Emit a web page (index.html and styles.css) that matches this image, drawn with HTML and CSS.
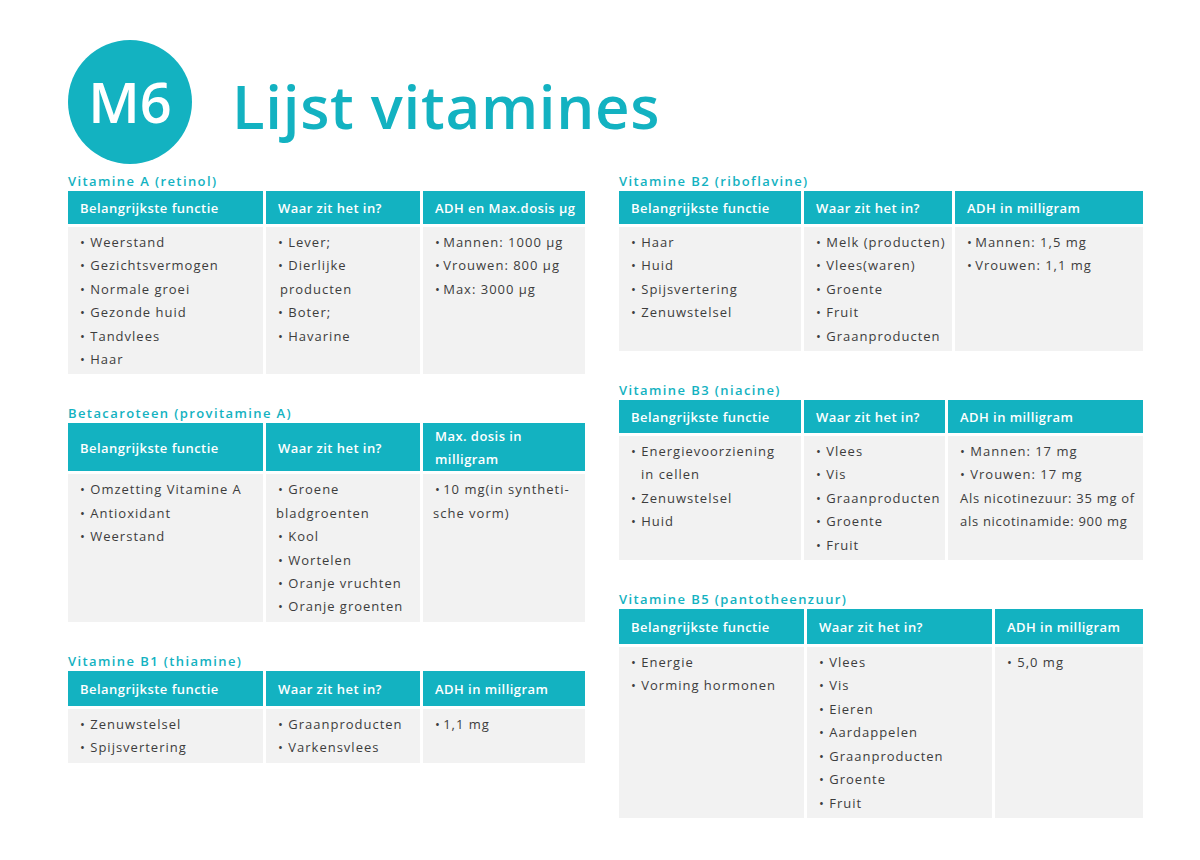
FILE: index.html
```html
<!DOCTYPE html>
<html lang="nl">
<head>
<meta charset="utf-8">
<title>Lijst vitamines</title>
<link rel="stylesheet" href="styles.css">
</head>
<body>
<div class="page">
  <header class="hero">
    <div class="badge">M6</div>
    <h1 class="title">Lijst vitamines</h1>
  </header>

  <main class="cols">
    <div class="col">
      <section class="vit">
        <h2 class="vit-name">Vitamine A (retinol)</h2>
        <div class="tbl tbl-left">
          <div class="th">Belangrijkste functie</div>
          <div class="th">Waar zit het in?</div>
          <div class="th">ADH en Max.dosis µg</div>
          <div class="td">
            <div class="li">• Weerstand</div>
            <div class="li">• Gezichtsvermogen</div>
            <div class="li">• Normale groei</div>
            <div class="li">• Gezonde huid</div>
            <div class="li">• Tandvlees</div>
            <div class="li">• Haar</div>
          </div>
          <div class="td">
            <div class="li">• Lever;</div>
            <div class="li">• Dierlijke</div>
            <div class="li cont-sm">producten</div>
            <div class="li">• Boter;</div>
            <div class="li">• Havarine</div>
          </div>
          <div class="td">
            <div class="li">•&#8202;Mannen: 1000 µg</div>
            <div class="li">•&#8202;Vrouwen: 800 µg</div>
            <div class="li">•&#8202;Max: 3000 µg</div>
          </div>
        </div>
      </section>

      <section class="vit">
        <h2 class="vit-name">Betacaroteen (provitamine A)</h2>
        <div class="tbl tbl-left">
          <div class="th">Belangrijkste functie</div>
          <div class="th">Waar zit het in?</div>
          <div class="th">Max. dosis in<br>milligram</div>
          <div class="td">
            <div class="li">• Omzetting Vitamine A</div>
            <div class="li">• Antioxidant</div>
            <div class="li">• Weerstand</div>
          </div>
          <div class="td">
            <div class="li">• Groene</div>
            <div class="li cont">bladgroenten</div>
            <div class="li">• Kool</div>
            <div class="li">• Wortelen</div>
            <div class="li">• Oranje vruchten</div>
            <div class="li">• Oranje groenten</div>
          </div>
          <div class="td">
            <div class="li">•&#8202;10 mg(in syntheti-</div>
            <div class="li cont">sche vorm)</div>
          </div>
        </div>
      </section>

      <section class="vit">
        <h2 class="vit-name">Vitamine B1 (thiamine)</h2>
        <div class="tbl tbl-left tall-head">
          <div class="th">Belangrijkste functie</div>
          <div class="th">Waar zit het in?</div>
          <div class="th">ADH in milligram</div>
          <div class="td">
            <div class="li">• Zenuwstelsel</div>
            <div class="li">• Spijsvertering</div>
          </div>
          <div class="td">
            <div class="li">• Graanproducten</div>
            <div class="li">• Varkensvlees</div>
          </div>
          <div class="td">
            <div class="li">•&#8202;1,1 mg</div>
          </div>
        </div>
      </section>
    </div>

    <div class="col">
      <section class="vit">
        <h2 class="vit-name">Vitamine B2 (riboflavine)</h2>
        <div class="tbl tbl-b2">
          <div class="th">Belangrijkste functie</div>
          <div class="th">Waar zit het in?</div>
          <div class="th">ADH in milligram</div>
          <div class="td">
            <div class="li">• Haar</div>
            <div class="li">• Huid</div>
            <div class="li">• Spijsvertering</div>
            <div class="li">• Zenuwstelsel</div>
          </div>
          <div class="td">
            <div class="li">• Melk (producten)</div>
            <div class="li">• Vlees(waren)</div>
            <div class="li">• Groente</div>
            <div class="li">• Fruit</div>
            <div class="li">• Graanproducten</div>
          </div>
          <div class="td">
            <div class="li">•&#8202;Mannen: 1,5 mg</div>
            <div class="li">•&#8202;Vrouwen: 1,1 mg</div>
          </div>
        </div>
      </section>

      <section class="vit">
        <h2 class="vit-name">Vitamine B3 (niacine)</h2>
        <div class="tbl tbl-b3">
          <div class="th">Belangrijkste functie</div>
          <div class="th">Waar zit het in?</div>
          <div class="th">ADH in milligram</div>
          <div class="td">
            <div class="li">• Energievoorziening</div>
            <div class="li cont-in">in cellen</div>
            <div class="li">• Zenuwstelsel</div>
            <div class="li">• Huid</div>
          </div>
          <div class="td">
            <div class="li">• Vlees</div>
            <div class="li">• Vis</div>
            <div class="li">• Graanproducten</div>
            <div class="li">• Groente</div>
            <div class="li">• Fruit</div>
          </div>
          <div class="td">
            <div class="li">• Mannen: 17 mg</div>
            <div class="li">• Vrouwen: 17 mg</div>
            <div class="li tight">Als nicotinezuur: 35 mg of</div>
            <div class="li tight">als nicotinamide: 900 mg</div>
          </div>
        </div>
      </section>

      <section class="vit">
        <h2 class="vit-name">Vitamine B5 (pantotheenzuur)</h2>
        <div class="tbl tbl-b5 tall-head">
          <div class="th">Belangrijkste functie</div>
          <div class="th">Waar zit het in?</div>
          <div class="th">ADH in milligram</div>
          <div class="td">
            <div class="li">• Energie</div>
            <div class="li">• Vorming hormonen</div>
          </div>
          <div class="td">
            <div class="li">• Vlees</div>
            <div class="li">• Vis</div>
            <div class="li">• Eieren</div>
            <div class="li">• Aardappelen</div>
            <div class="li">• Graanproducten</div>
            <div class="li">• Groente</div>
            <div class="li">• Fruit</div>
          </div>
          <div class="td">
            <div class="li">• 5,0 mg</div>
          </div>
        </div>
      </section>
    </div>
  </main>
</div>
</body>
</html>
```

FILE: styles.css
```css
html, body {
  margin: 0;
  padding: 0;
  background: #ffffff;
}

body {
  font-family: "Open Sans", "DejaVu Sans", sans-serif;
  color: #3d3d3d;
}

.page {
  width: 1200px;
  height: 860px;
  box-sizing: border-box;
  padding: 40px 57px 0 68px;
}

.hero {
  display: flex;
  align-items: center;
  height: 124px;
}

.badge {
  width: 124px;
  height: 124px;
  border-radius: 50%;
  background: #13b2c1;
  color: #ffffff;
  display: flex;
  align-items: center;
  justify-content: center;
  font-size: 56px;
  font-weight: 600;
  letter-spacing: 0;
  line-height: 1;
  padding-bottom: 2px;
  box-sizing: border-box;
}

.title {
  margin: 8px 0 0 40px;
  font-size: 60px;
  font-weight: 600;
  letter-spacing: 0.7px;
  color: #13b2c1;
  line-height: 1;
}

.cols {
  display: grid;
  grid-template-columns: 517px 524px;
  column-gap: 34px;
  margin-top: 8px;
}

.col {
  display: flex;
  flex-direction: column;
  gap: 30px;
}

.vit-name {
  margin: 0;
  font-size: 13px;
  line-height: 19px;
  font-weight: 600;
  letter-spacing: 1.4px;
  color: #13b2c1;
  white-space: nowrap;
}

.tbl {
  display: grid;
  column-gap: 3px;
  row-gap: 3px;
}

.tbl-left { grid-template-columns: 195px 154px 162px; }
.tbl-b2 { grid-template-columns: 182px 148px 188px; }
.tbl-b3 { grid-template-columns: 182px 141px 195px; }
.tbl-b5 { grid-template-columns: 185px 185px 148px; }

.th {
  background: #13b2c1;
  color: #ffffff;
  font-size: 13px;
  font-weight: 600;
  letter-spacing: 0.45px;
  line-height: 23px;
  min-height: 33px;
  padding: 2px 12px 0;
  box-sizing: border-box;
  display: flex;
  align-items: center;
  white-space: nowrap;
}

.tall-head .th {
  min-height: 35px;
}

.td {
  background: #f2f2f2;
  padding: 4px 12px 3px;
}

.li {
  font-size: 13px;
  line-height: 23.4px;
  letter-spacing: 1px;
  white-space: nowrap;
}

.tight { letter-spacing: 0.7px; }

.cont { margin-left: -2px; }
.cont-sm { margin-left: 2px; }
.cont-in { margin-left: 10px; }
```
